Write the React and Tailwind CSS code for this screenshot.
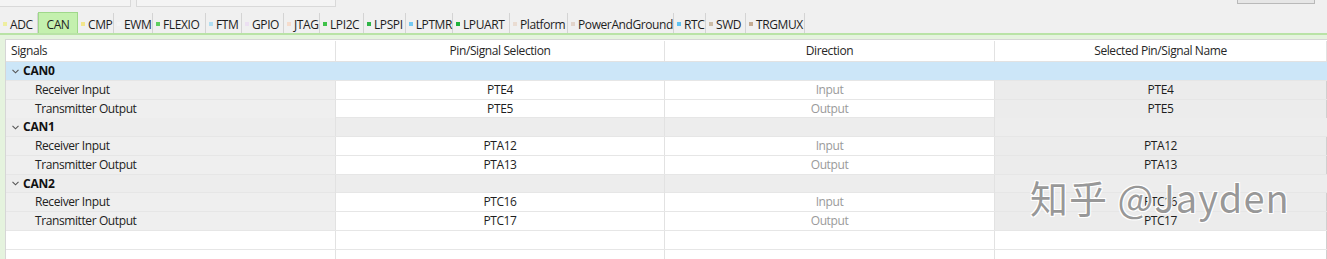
import React from "react";

const tabs = [
  { n: "ADC", w: 38, c: "bg-[#eeeea0]" },
  { n: "CAN", w: 40, c: "", sel: true },
  { n: "CMP", w: 36, c: "bg-[#f3e68c]" },
  { n: "EWM", w: 39, c: "bg-[#f4f4f4]" },
  { n: "FLEXIO", w: 53, c: "bg-[#5fcf5f]" },
  { n: "FTM", w: 36, c: "bg-[#b0def2]" },
  { n: "GPIO", w: 42, c: "bg-[#ece0f2]" },
  { n: "JTAG", w: 36, c: "bg-[#f6dccc]" },
  { n: "LPI2C", w: 44, c: "bg-[#3fc24a]" },
  { n: "LPSPI", w: 42, c: "bg-[#2fb447]" },
  { n: "LPTMR", w: 47, c: "bg-[#74c9f2]" },
  { n: "LPUART", w: 57, c: "bg-[#1fb23c]" },
  { n: "Platform", w: 58, c: "bg-[#eadcd2]" },
  { n: "PowerAndGround", w: 106, c: "bg-[#e2d4ca]" },
  { n: "RTC", w: 32, c: "bg-[#5fc2f2]" },
  { n: "SWD", w: 40, c: "bg-[#ccbca6]" },
  { n: "TRGMUX", w: 59, c: "bg-[#c4ab92]" },
];

const groups = [
  { name: "CAN0", sel: true, rows: [["Receiver Input", "PTE4", "Input"], ["Transmitter Output", "PTE5", "Output"]] },
  { name: "CAN1", rows: [["Receiver Input", "PTA12", "Input"], ["Transmitter Output", "PTA13", "Output"]] },
  { name: "CAN2", rows: [["Receiver Input", "PTC16", "Input"], ["Transmitter Output", "PTC17", "Output"]] },
];

const grid = "grid grid-cols-[330px_329px_330px_1fr] h-[18.75px] border-b border-[#e6e6e6]";
const cell = "border-r border-[#e2e2e2] flex items-center";

function Chevron() {
  return (
    <svg width="7" height="5" viewBox="0 0 7 5" className="mr-[4px]">
      <path d="M0.5 0.8 L3.5 3.8 L6.5 0.8" fill="none" stroke="#555" strokeWidth="1.1" />
    </svg>
  );
}

export default function App() {
  return (
    <div
      className="w-[1327px] h-[259px] bg-[#f0f0f0] relative overflow-hidden text-[12px] tracking-[-0.4px] text-[#1e1e1e]"
      style={{ fontFamily: '"Open Sans", "Noto Sans", sans-serif' }}
    >
      {/* top strip */}
      <div className="h-[13px] flex">
        <div className="w-[131px] h-[7px] border-b border-r border-[#d9d9d9] bg-[#f4f4f4]" />
        <div className="ml-[5px] w-[200px] h-[7px] border-b border-l border-r border-[#d9d9d9] bg-[#f4f4f4]" />
        <div className="ml-auto mr-[12px] w-[78px] h-[4px] border-b border-l border-r border-[#b9b9b9] bg-[#e6e6e6]" />
      </div>
      {/* tabs */}
      <div className="h-[20px] flex items-stretch">
        {tabs.map((t) => (
          <div
            key={t.n}
            style={{ width: t.w }}
            className={
              t.sel
                ? "flex items-center justify-center pt-[3px] bg-[#c4f0ae] border border-b-0 border-[#9fd88a] h-[21px] -mt-[1px]"
                : "flex items-center pt-[3px] border-r border-[#d4d4d4] pl-[3px]"
            }
          >
            {!t.sel && <span className={"w-[4px] h-[4px] mr-[3px] -mt-[1px] " + t.c} />}
            <span className="leading-none whitespace-nowrap">{t.n}</span>
          </div>
        ))}
      </div>
      {/* panel */}
      <div className="border-t-[2px] border-[#b9e3a6] bg-[#e5f3de] pl-[5px] pt-[4px] h-[226px]">
        <div className="bg-white border-l border-t border-[#d6d6d6] h-full">
          {/* header */}
          <div className="grid grid-cols-[330px_329px_330px_1fr] h-[22px] pt-[1px] border-b border-[#e2e2e2] text-[#262626]">
            <div className={cell + " pl-[5px]"}>Signals</div>
            <div className={cell + " justify-center"}>Pin/Signal Selection</div>
            <div className={cell + " justify-center"}>Direction</div>
            <div className={cell + " justify-center"}>Selected Pin/Signal Name</div>
          </div>
          {groups.map((g) => (
            <React.Fragment key={g.name}>
              <div className={grid + (g.sel ? " bg-[#cce6f8]" : " bg-[#ededed]")}>
                <div className={(g.sel ? "" : "border-r border-[#e2e2e2] ") + "flex items-center pl-[6px] font-bold text-[#111] tracking-[-0.2px]"}>
                  <Chevron />
                  {g.name}
                </div>
                <div className={g.sel ? "" : "border-r border-[#e2e2e2]"} />
                <div className={g.sel ? "" : "border-r border-[#e2e2e2]"} />
                <div />
              </div>
              {g.rows.map((r) => (
                <div key={r[0]} className={grid}>
                  <div className={cell + " pl-[29px] bg-[#efefef] text-[#222]"}>{r[0]}</div>
                  <div className={cell + " justify-center"}>{r[1]}</div>
                  <div className={cell + " justify-center text-[#9a9a9a]"}>{r[2]}</div>
                  <div className="flex items-center justify-center bg-[#ececec] border-r border-[#d0d0d0]">{r[1]}</div>
                </div>
              ))}
            </React.Fragment>
          ))}
          <div className={grid}>
            <div className={cell} />
            <div className={cell} />
            <div className={cell} />
            <div className="border-r border-[#d0d0d0]" />
          </div>
          <div className={grid}>
            <div className={cell} />
            <div className={cell} />
            <div className={cell} />
            <div className="border-r border-[#d0d0d0]" />
          </div>
        </div>
      </div>
      {/* watermark */}
      <div
        className="absolute left-[1030px] top-[178px] text-[38px] leading-none text-[#858585]/85 whitespace-nowrap tracking-[1px]"
        style={{
          fontFamily: '"Noto Sans CJK SC", "Liberation Sans", sans-serif',
          textShadow: "1px 1px 0 #fff, -1px -1px 0 #fff, 1px -1px 0 #fff, -1px 1px 0 #fff",
        }}
      >
        知乎 @Jayden
      </div>
    </div>
  );
}
